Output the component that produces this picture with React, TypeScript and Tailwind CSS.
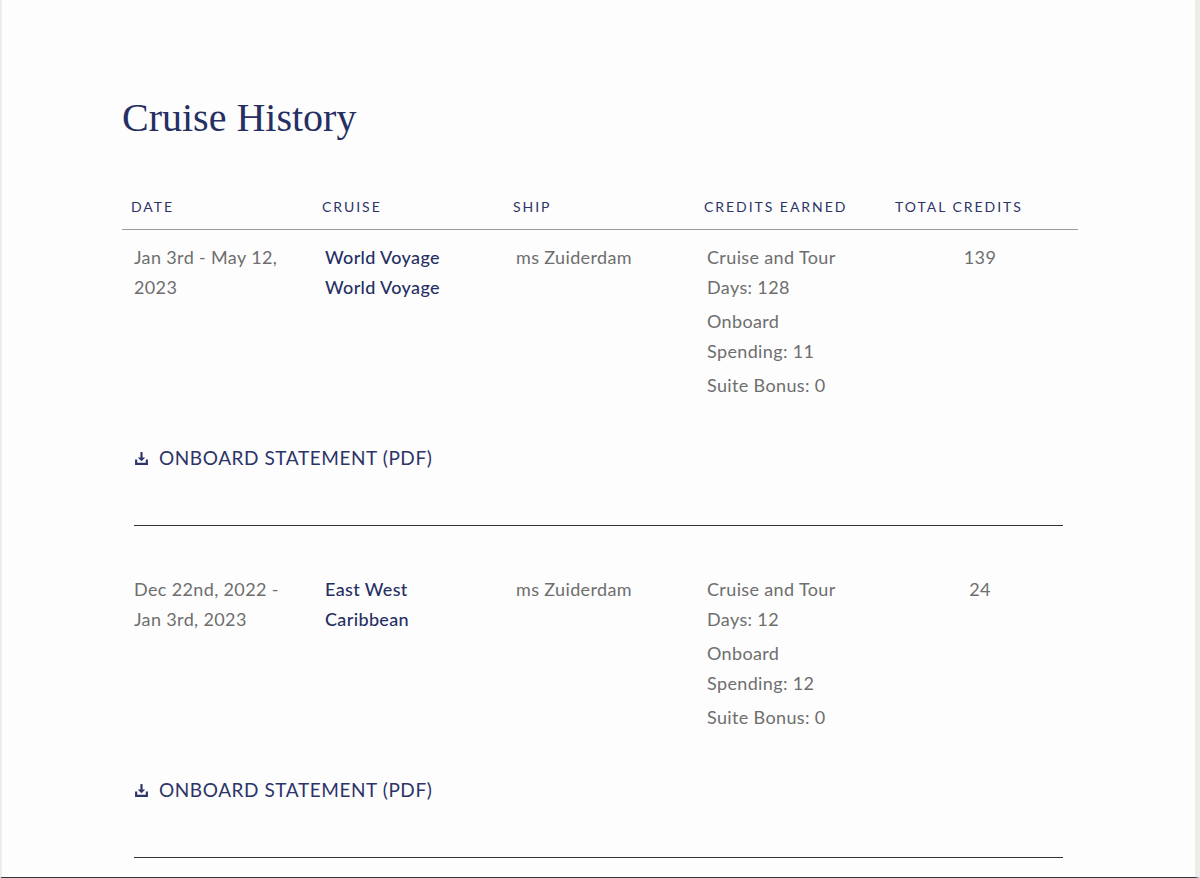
const rows = [
  {
    date: "Jan 3rd - May 12, 2023",
    cruise: ["World Voyage", "World Voyage"],
    ship: "ms Zuiderdam",
    credits: [["Cruise and Tour", "Days: 128"], ["Onboard", "Spending: 11"], ["Suite Bonus: 0"]],
    total: "139",
  },
  {
    date: "Dec 22nd, 2022 - Jan 3rd, 2023",
    cruise: ["East West Caribbean"],
    ship: "ms Zuiderdam",
    credits: [["Cruise and Tour", "Days: 12"], ["Onboard", "Spending: 12"], ["Suite Bonus: 0"]],
    total: "24",
  },
];

const sans = { fontFamily: "Lato, 'Open Sans', sans-serif" };

function DownloadIcon() {
  return (
    <svg width="15" height="15" viewBox="0 0 14 14" fill="#2c3468">
      <rect x="6" y="1" width="2" height="6" />
      <path d="M3.5 6h7L7 9.5z" />
      <path d="M1 8h2v3h8V8h2v5H1z" />
    </svg>
  );
}

export default function App() {
  return (
    <div className="w-[1200px] h-[878px] overflow-hidden bg-[#fdfdfd] border-l-2 border-l-[#eeece9] border-r-[5px] border-r-[#eeece9] border-b border-b-[#333]" style={sans}>
      <div className="pl-[120px] w-[1076px] pt-[94px]">
        <h1 className="text-[40px] leading-[48px] text-[#262f63]" style={{ fontFamily: "'Liberation Serif', serif" }}>
          Cruise History
        </h1>
        <div className="mt-[54px] grid grid-cols-[191px_191px_191px_191px_191px] px-[9px] pb-[12px] border-b border-[#9a9a9a] text-[14px] tracking-[0.14em] text-[#2c3468]">
          <div>DATE</div>
          <div>CRUISE</div>
          <div>SHIP</div>
          <div>CREDITS EARNED</div>
          <div>TOTAL CREDITS</div>
        </div>
        {rows.map((r, i) => (
          <div key={i} className="px-3 w-[955px]">
            <div className="pt-[12px] grid grid-cols-[191px_191px_191px_191px_150px] text-[18px] leading-[30px] tracking-[0.02em]">
              <div className="text-[#6e6e6e] pr-8">{r.date}</div>
              <div className="text-[#262f63] font-medium pr-12">
                {r.cruise.map((c, j) => (
                  <div key={j}>{c}</div>
                ))}
              </div>
              <div className="text-[#6e6e6e]">{r.ship}</div>
              <div className="text-[#6e6e6e] flex flex-col gap-[4px]">
                {r.credits.map((g, j) => (
                  <div key={j}>
                    {g.map((l) => (
                      <div key={l}>{l}</div>
                    ))}
                  </div>
                ))}
              </div>
              <div className="text-[#6e6e6e] text-center pl-[14px]">{r.total}</div>
            </div>
            <div className="mt-[43px] flex items-center gap-[10px] text-[19px] leading-[30px] text-[#2c3468] tracking-[0.03em]">
              <DownloadIcon />
              <span>ONBOARD STATEMENT (PDF)</span>
            </div>
            <div className="mt-[52px] border-b border-[#333] w-[929px]" />
            <div className="h-[36px]" />
          </div>
        ))}
      </div>
    </div>
  );
}
